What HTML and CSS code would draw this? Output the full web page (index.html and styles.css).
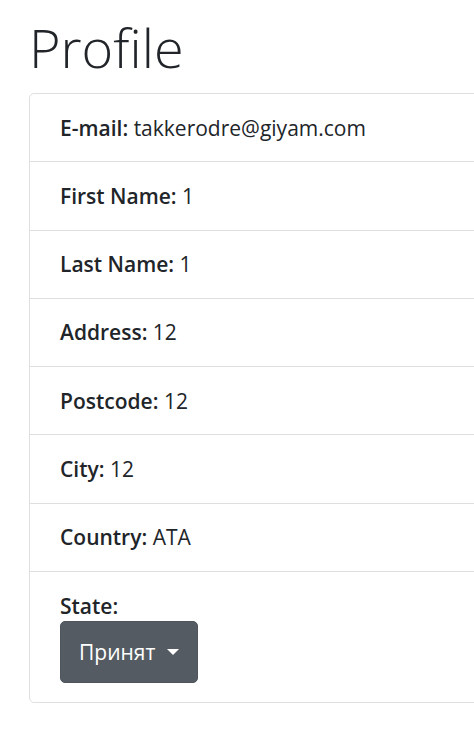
FILE: index.html
```html
<!DOCTYPE html>
<html lang="en">
<head>
<meta charset="utf-8">
<title>Profile</title>
<link rel="stylesheet" href="styles.css">
</head>
<body>
<main class="page">
  <h1 class="title">Profile</h1>
  <ul class="list">
    <li class="item"><strong>E-mail:</strong> takkerodre@giyam.com</li>
    <li class="item"><strong>First Name:</strong> 1</li>
    <li class="item"><strong>Last Name:</strong> 1</li>
    <li class="item"><strong>Address:</strong> 12</li>
    <li class="item"><strong>Postcode:</strong> 12</li>
    <li class="item"><strong>City:</strong> 12</li>
    <li class="item"><strong>Country:</strong> ATA</li>
    <li class="item item-state">
      <strong>State:</strong>
      <div class="dropdown">
        <button class="btn" type="button">Принят<span class="caret"></span></button>
      </div>
    </li>
  </ul>
</main>
</body>
</html>
```
FILE: styles.css
```css
html, body {
  margin: 0;
  padding: 0;
  background: #fff;
  overflow: hidden;
}
body {
  font-family: "Open Sans", "Noto Sans", sans-serif;
  color: #212529;
  font-size: 21px;
  line-height: 30px;
}
.page {
  padding: 16px 0 0 29px;
  width: 700px;
}
.title {
  margin: 0 0 14px 0;
  font-size: 54px;
  line-height: 63px;
  font-weight: 300;
}
.list {
  list-style: none;
  margin: 0;
  padding: 0;
  border: 1px solid #dfdfdf;
  border-radius: 5px;
  width: 640px;
}
.item {
  padding: 18.65px 30px 18.65px 30px;
  border-top: 1px solid #dfdfdf;
}
.item:first-child {
  border-top: 0;
}
.item strong {
  font-weight: 600;
}
.item-state {
  padding-bottom: 19px;
}
.dropdown {
  display: flex;
}
.btn {
  display: inline-flex;
  align-items: center;
  font-family: inherit;
  font-size: 21px;
  line-height: 30px;
  font-weight: 500;
  color: #fff;
  background: #545b62;
  border: 1px solid #4e555b;
  border-radius: 5px;
  padding: 15px 18px 15px 18px;
}
.caret {
  display: inline-block;
  margin-left: 12px;
  width: 0;
  height: 0;
  border-top: 6px solid #fff;
  border-left: 6px solid transparent;
  border-right: 6px solid transparent;
}
```
